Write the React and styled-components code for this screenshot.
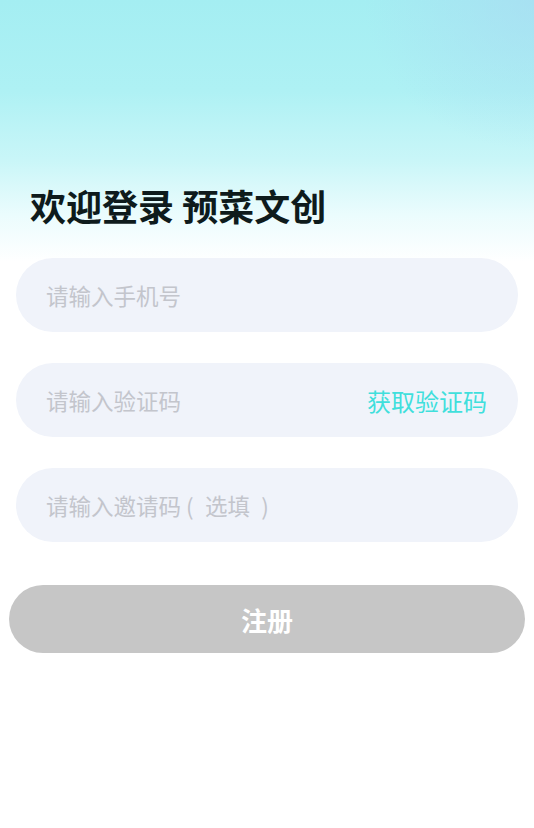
import * as React from 'react';
import styled, { createGlobalStyle } from 'styled-components';

const GlobalStyle = createGlobalStyle`
  html, body {
    margin: 0;
    padding: 0;
    background: #ffffff;
  }
  body {
    font-family: 'Noto Sans CJK SC', 'Noto Sans', sans-serif;
  }
  * {
    box-sizing: border-box;
  }
`;

const Page = styled.div`
  min-height: 828px;
  display: flex;
  flex-direction: column;
  background:
    radial-gradient(ellipse 170px 150px at 100% 0%, rgba(170, 216, 242, 0.6), rgba(170, 216, 242, 0) 100%),
    linear-gradient(180deg, #a4eef2 0px, #aef1f4 90px, #c9f6f8 160px, #ebfcfd 215px, #ffffff 262px);
`;

const Title = styled.h1`
  margin: 184px 0 0 30px;
  font-size: 36px;
  line-height: 43px;
  font-weight: 700;
  color: #0e1b1c;
`;

const Form = styled.form`
  display: flex;
  flex-direction: column;
  gap: 31px;
  margin: 31px 16px 0;
`;

const Field = styled.div`
  height: 74px;
  border-radius: 37px;
  background: #f0f3fa;
  display: flex;
  align-items: center;
  padding: 0 31px 0 30px;
`;

const Input = styled.input`
  flex: 1;
  min-width: 0;
  border: none;
  outline: none;
  background: transparent;
  font-family: inherit;
  font-size: 22.5px;
  color: #333;
  padding: 0;

  &::placeholder {
    color: #c3c5cc;
  }
`;

const CodeLink = styled.span`
  font-size: 24px;
  color: #40dfdc;
  white-space: nowrap;
`;

const Submit = styled.button`
  margin: 43px 9px 0;
  height: 68px;
  border: none;
  border-radius: 34px;
  background: #c6c6c6;
  color: #ffffff;
  font-family: inherit;
  font-size: 26px;
  font-weight: 700;
  cursor: pointer;
`;

export default function App() {
  const [phone, setPhone] = React.useState('');
  const [code, setCode] = React.useState('');
  const [invite, setInvite] = React.useState('');

  return (
    <>
      <GlobalStyle />
      <Page>
        <Title>欢迎登录 预菜文创</Title>
        <Form onSubmit={(e) => e.preventDefault()}>
          <Field>
            <Input
              placeholder="请输入手机号"
              value={phone}
              onChange={(e) => setPhone(e.target.value)}
            />
          </Field>
          <Field>
            <Input
              placeholder="请输入验证码"
              value={code}
              onChange={(e) => setCode(e.target.value)}
            />
            <CodeLink>获取验证码</CodeLink>
          </Field>
          <Field>
            <Input
              placeholder={'请输入邀请码 (\u2002选填\u2002)'}
              value={invite}
              onChange={(e) => setInvite(e.target.value)}
            />
          </Field>
        </Form>
        <Submit type="button">注册</Submit>
      </Page>
    </>
  );
}
